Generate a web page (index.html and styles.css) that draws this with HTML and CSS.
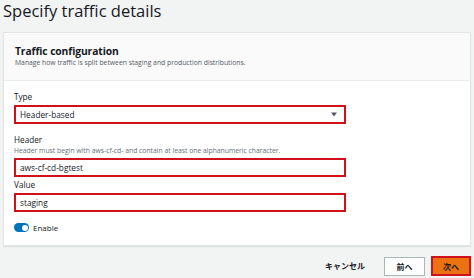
FILE: index.html
```html
<!DOCTYPE html>
<html lang="en">
<head>
<meta charset="utf-8">
<title>Specify traffic details</title>
<link rel="stylesheet" href="styles.css">
</head>
<body>
<div class="page">
  <h1 class="title">Specify traffic details</h1>
  <section class="card">
    <header class="card-head">
      <h2 class="card-title">Traffic configuration</h2>
      <p class="card-sub">Manage how traffic is split between staging and production distributions.</p>
    </header>
    <div class="card-body">
      <div class="field">
        <label class="label">Type</label>
        <div class="control select">
          <span class="control-text">Header-based</span>
          <svg class="caret" width="6" height="5" viewBox="0 0 6 5"><path d="M0 0.5H6L3 4.5Z" fill="#545b64"/></svg>
        </div>
      </div>
      <div class="field field-header">
        <label class="label">Header</label>
        <p class="desc">Header must begin with aws-cf-cd- and contain at least one alphanumeric character.</p>
        <div class="control"><span class="control-text">aws-cf-cd-bgtest</span></div>
      </div>
      <div class="field field-value">
        <label class="label">Value</label>
        <div class="control"><span class="control-text">staging</span></div>
      </div>
      <div class="toggle-row">
        <span class="toggle"><span class="knob"></span></span>
        <span class="toggle-label">Enable</span>
      </div>
    </div>
  </section>
  <footer class="actions">
    <button class="btn-link">キャンセル</button>
    <button class="btn">前へ</button>
    <button class="btn btn-primary">次へ</button>
  </footer>
</div>
</body>
</html>
```
FILE: styles.css
```css
html, body {
  margin: 0;
  padding: 0;
  background: #f2f3f3;
}
body {
  font-family: "Open Sans", "Noto Sans", "Noto Sans CJK JP", sans-serif;
  color: #16191f;
  width: 474px;
  height: 278px;
  overflow: hidden;
}
.page {
  padding: 0 3px;
}
.title {
  margin: 0 0 10px;
  font-size: 16.5px;
  line-height: 22px;
  height: 22px;
  font-weight: 400;
  color: #16191f;
}
.card {
  background: #ffffff;
  border: 1px solid #e3e5e5;
  box-shadow: 0 1px 1px rgba(0, 28, 36, 0.08);
}
.card-head {
  background: #fafafa;
  padding: 11px 11px 13px;
  border-bottom: 1px solid #eaeded;
}
.card-title {
  margin: 0;
  font-size: 10.3px;
  line-height: 14px;
  font-weight: 700;
  letter-spacing: -0.1px;
}
.card-sub {
  margin: 0;
  font-size: 6.8px;
  line-height: 9px;
  color: #545b64;
}
.card-body {
  padding: 10px 10px 13px;
}
.field {
  display: flex;
  flex-direction: column;
  align-items: flex-start;
}
.label {
  font-size: 8.2px;
  line-height: 11px;
  color: #16191f;
  margin-bottom: 3px;
}
.field-header {
  margin-top: 10px;
}
.field-header .label {
  margin-bottom: 0;
}
.desc {
  margin: 0 0 2px;
  font-size: 6.8px;
  line-height: 11px;
  color: #687078;
}
.field-value {
  margin-top: 2px;
}
.control {
  box-sizing: border-box;
  width: 332px;
  height: 19px;
  border: 2px solid #d0101b;
  background: #ffffff;
  padding: 0 4px;
  display: flex;
  align-items: center;
  justify-content: space-between;
}
.control-text {
  font-size: 8.3px;
  line-height: 11px;
  color: #16191f;
}
.select {
  padding-right: 7px;
}
.caret {
  display: block;
}
.toggle-row {
  margin-top: 11px;
  height: 9px;
  display: flex;
  align-items: center;
  gap: 4px;
}
.toggle {
  box-sizing: border-box;
  width: 15px;
  height: 9px;
  border-radius: 5px;
  background: #0073bb;
  display: flex;
  align-items: center;
  justify-content: flex-end;
  padding: 0 1.5px;
}
.knob {
  width: 6px;
  height: 6px;
  border-radius: 50%;
  background: #ffffff;
}
.toggle-label {
  font-size: 8px;
  line-height: 11px;
}
.actions {
  margin-top: 10px;
  display: flex;
  justify-content: flex-end;
  align-items: center;
  gap: 6px;
}
.btn-link,
.btn {
  font-family: "Noto Sans CJK JP", "Open Sans", sans-serif;
  font-size: 8px;
  font-weight: 700;
  color: #16191f;
  margin: 0;
}
.btn-link {
  background: none;
  border: none;
  padding: 0 13px;
  height: 20px;
  line-height: 20px;
  color: #16191f;
}
.btn {
  box-sizing: border-box;
  height: 19px;
  width: 41px;
  background: #ffffff;
  border: 1px solid #aab7b8;
  padding: 0;
  line-height: 17px;
  color: #16191f;
}
.btn-primary {
  width: 40px;
  height: 20px;
  background: #ec7211;
  border: 2px solid #d0101b;
  color: #16191f;
}
```
